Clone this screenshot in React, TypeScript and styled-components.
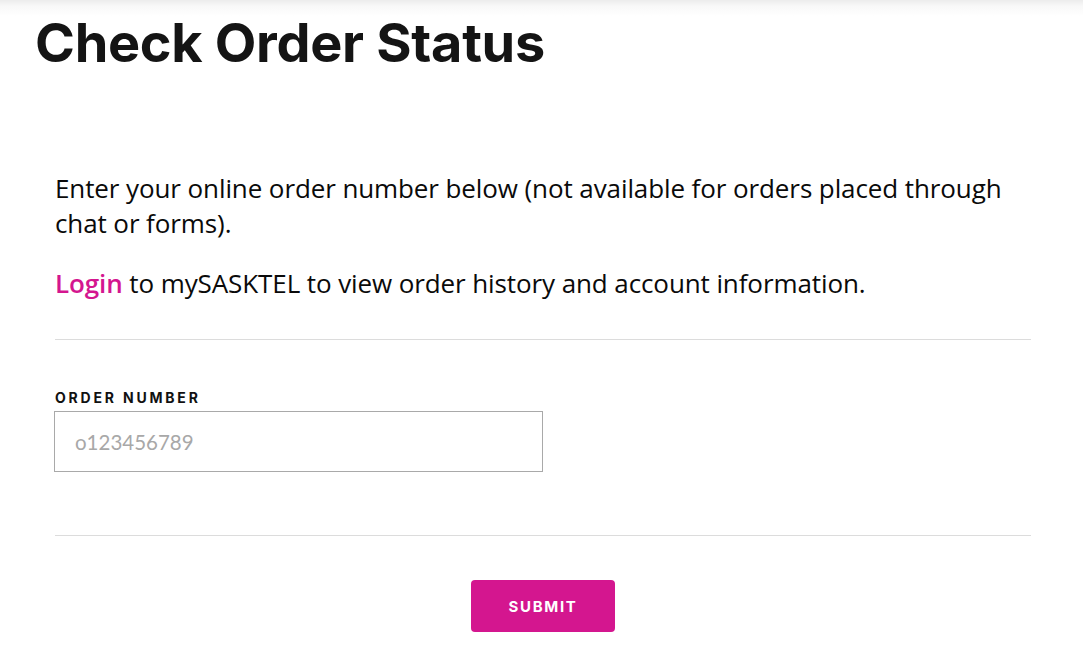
import React, { useState } from 'react';
import styled, { createGlobalStyle } from 'styled-components';

const GlobalStyle = createGlobalStyle`
  html, body {
    margin: 0;
    padding: 0;
    background: #ffffff;
  }
  * {
    box-sizing: border-box;
  }
`;

const Page = styled.div`
  min-height: 660px;
  padding: 0 52px 0 35px;
  background: linear-gradient(180deg, #ececec 0px, #f8f8f8 6px, #ffffff 16px);
`;

const Title = styled.h1`
  margin: 0;
  padding-top: 14px;
  font-family: Inter, 'Liberation Sans', sans-serif;
  font-weight: 700;
  font-size: 54px;
  line-height: 58px;
  letter-spacing: -0.3px;
  color: #141414;
`;

const Content = styled.div`
  padding: 99px 0 0 20px;
`;

const Intro = styled.p`
  margin: 0 0 25px;
  font-family: 'Open Sans', 'Noto Sans', sans-serif;
  font-size: 26px;
  line-height: 35px;
  letter-spacing: -0.1px;
  color: #0a0a0a;

  &:last-of-type {
    margin-bottom: 0;
  }
`;

const LoginLink = styled.a`
  color: #d4168f;
  font-weight: 600;
  text-decoration: none;
  cursor: pointer;
`;

const Divider = styled.hr<{ $top: number }>`
  margin: ${(p) => p.$top}px 0 0;
  border: none;
  border-top: 1px solid #dcdcdc;
`;

const Field = styled.div`
  display: flex;
  flex-direction: column;
  gap: 5px;
  padding-top: 49px;
  padding-bottom: 63px;
`;

const Label = styled.label`
  font-family: Inter, 'Liberation Sans', sans-serif;
  font-weight: 700;
  font-size: 14px;
  line-height: 17px;
  letter-spacing: 2.8px;
  color: #111;
`;

const Input = styled.input`
  width: 489px;
  height: 61px;
  margin-left: -1px;
  padding: 0 20px;
  border: 1px solid #a9a9a9;
  border-radius: 0;
  font-family: Lato, 'Open Sans', sans-serif;
  font-size: 20.5px;
  color: #222;
  outline: none;

  &::placeholder {
    color: #a8a8a8;
  }
`;

const Actions = styled.div`
  display: flex;
  justify-content: center;
  padding-top: 44px;
`;

const SubmitButton = styled.button`
  width: 144px;
  height: 52px;
  border: none;
  border-radius: 4px;
  background: #d4168f;
  color: #fff;
  font-family: Inter, 'Liberation Sans', sans-serif;
  font-weight: 700;
  font-size: 15px;
  letter-spacing: 1.7px;
  cursor: pointer;
`;

const App: React.FC = () => {
  const [orderNumber, setOrderNumber] = useState('');

  return (
    <>
      <GlobalStyle />
      <Page>
        <Title>Check Order Status</Title>
        <Content>
          <Intro>
            Enter your online order number below (not available for orders placed through
            chat or forms).
          </Intro>
          <Intro>
            <LoginLink>Login</LoginLink> to mySASKTEL to view order history and account
            information.
          </Intro>
          <Divider $top={38} />
          <Field>
            <Label htmlFor="order">ORDER NUMBER</Label>
            <Input
              id="order"
              placeholder="o123456789"
              value={orderNumber}
              onChange={(e) => setOrderNumber(e.target.value)}
            />
          </Field>
          <Divider $top={0} />
          <Actions>
            <SubmitButton type="button">SUBMIT</SubmitButton>
          </Actions>
        </Content>
      </Page>
    </>
  );
};

export default App;
